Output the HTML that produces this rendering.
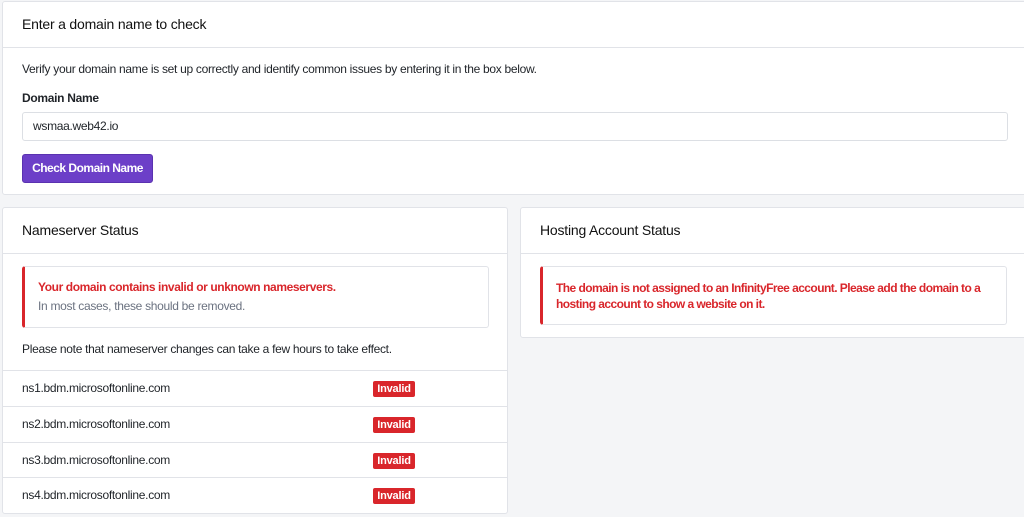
<!DOCTYPE html>
<html><head><meta charset="utf-8"><style>
*{box-sizing:border-box;margin:0;padding:0}
body{width:1024px;height:517px;background:#f4f5f7;font-family:"Liberation Sans",sans-serif;color:#1f2328;position:relative;overflow:hidden;font-size:12px;letter-spacing:-0.3px}
.card{position:absolute;background:#fff;border:1px solid #e1e3e8;border-radius:3px}
.hd{height:46px;border-bottom:1px solid #e1e3e8;padding:0 19px;line-height:45px;font-size:14px;color:#111;letter-spacing:-0.2px}
.abs{position:absolute}
.alert{position:absolute;border:1px solid #e1e3e8;border-left:3px solid #d9262b;border-radius:3px;background:#fff}
.red{color:#d9262b;font-weight:bold;font-size:12px;letter-spacing:-0.4px}
.row{position:absolute;left:0;right:0;height:36px;border-top:1px solid #e1e3e8;line-height:34px;padding-left:19px}
.badge{position:absolute;left:370px;top:10px;width:42px;height:16px;background:#d9262b;color:#fff;font-weight:bold;font-size:11px;line-height:16px;text-align:center;border-radius:2px;letter-spacing:-0.2px}
</style></head><body>
<div class="card" style="left:2px;top:1px;width:1030px;height:194px">
 <div class="hd">Enter a domain name to check</div>
 <div class="abs" style="left:19px;top:60px">Verify your domain name is set up correctly and identify common issues by entering it in the box below.</div>
 <div class="abs" style="left:19px;top:89px;font-weight:bold">Domain Name</div>
 <div class="abs" style="left:19px;top:110px;width:986px;height:29px;border:1px solid #dcdfe4;border-radius:3px;padding-left:10px;line-height:27px">wsmaa.web42.io</div>
 <div class="abs" style="left:19px;top:152px;width:131px;height:29px;background:#6c3fc8;border:1px solid #5a32b0;border-radius:3px;color:#fff;font-weight:bold;text-align:center;line-height:27px;letter-spacing:-0.5px">Check Domain Name</div>
</div>
<div class="card" style="left:2px;top:207px;width:506px;height:307px">
 <div class="hd">Nameserver Status</div>
 <div class="alert" style="left:19px;top:58px;width:467px;height:62px">
  <div class="abs red" style="left:13px;top:13px">Your domain contains invalid or unknown nameservers.</div>
  <div class="abs" style="left:13px;top:32px;color:#6b7280">In most cases, these should be removed.</div>
 </div>
 <div class="abs" style="left:19px;top:134px">Please note that nameserver changes can take a few hours to take effect.</div>
 <div class="row" style="top:162px">ns1.bdm.microsoftonline.com<span class="badge">Invalid</span></div>
 <div class="row" style="top:198px">ns2.bdm.microsoftonline.com<span class="badge">Invalid</span></div>
 <div class="row" style="top:234px">ns3.bdm.microsoftonline.com<span class="badge">Invalid</span></div>
 <div class="row" style="top:269px">ns4.bdm.microsoftonline.com<span class="badge">Invalid</span></div>
</div>
<div class="card" style="left:520px;top:207px;width:520px;height:131px">
 <div class="hd">Hosting Account Status</div>
 <div class="alert" style="left:19px;top:58px;width:467px;height:59px">
  <div class="abs red" style="left:13px;top:13px;line-height:16px;width:445px;letter-spacing:-0.55px">The domain is not assigned to an InfinityFree account. Please add the domain to a hosting account to show a website on it.</div>
 </div>
</div>
</body></html>
